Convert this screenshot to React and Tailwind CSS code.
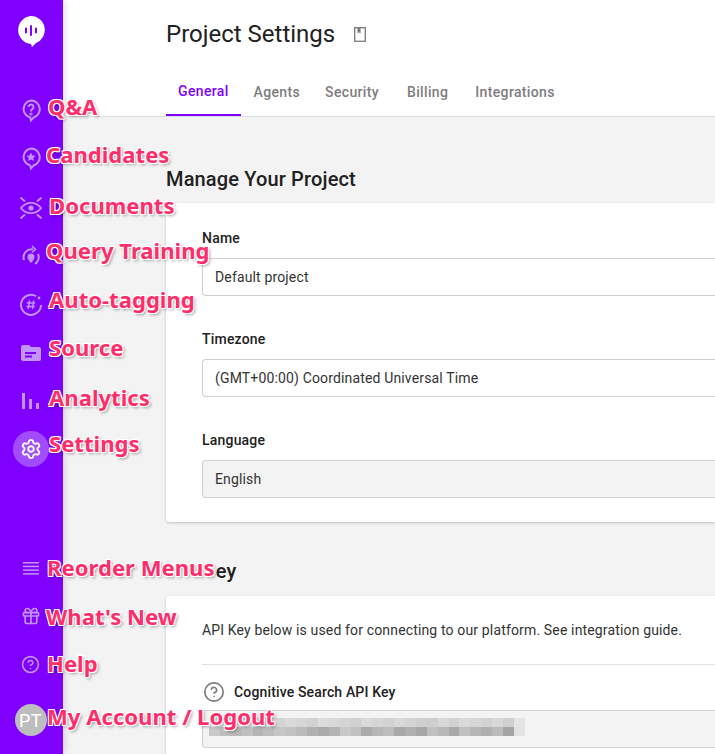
import React from 'react'
import { CircleHelp, Gift, Settings } from 'lucide-react'

const tabs = [
  { name: 'General', cls: 'text-[#7f00ff] border-b-2 border-[#7f00ff] mr-[1px]' },
  { name: 'Agents', cls: 'text-[#7d7d7d] mr-[1px]' },
  { name: 'Security', cls: 'text-[#7d7d7d] mr-[4px]' },
  { name: 'Billing', cls: 'text-[#7d7d7d] mr-[3px]' },
  { name: 'Integrations', cls: 'text-[#7d7d7d]' },
]

const blurTop = ['#e8e8e8', '#e4e4e4', '#dedede', '#e0e0e0', '#d8d8d8', '#dcdcdc', '#d4d4d4', '#dadada', '#d6d6d6', '#d2d2d2', '#dcdcdc', '#d8d8d8', '#d4d4d4', '#d0d0d0', '#dadada', '#d6d6d6', '#d2d2d2', '#d8d8d8', '#d4d4d4', '#d0d0d0', '#cfcfcf', '#d8d8d8', '#d2d2d2', '#dadada', '#d6d6d6', '#d2d2d2', '#d8d8d8', '#d0d0d0', '#e4e4e4']
const blurBottom = ['#c8c8c8', '#bdbdbd', '#b8b8b8', '#c0c0c0', '#b4b4b4', '#bcbcbc', '#c6c6c6', '#c2c2c2', '#bbbbbb', '#b0b0b0', '#aaaaaa', '#b4b4b4', '#c8c8c8', '#c0c0c0', '#aaaaaa', '#b6b6b6', '#bcbcbc', '#a8a8a8', '#b0b0b0', '#a6a6a6', '#c0c0c0', '#b8b8b8', '#a8a8a8', '#c0c0c0', '#b6b6b6', '#b0b0b0', '#bcbcbc', '#a4a4a4', '#e2e2e2']

const labels = [
  { text: 'Q&A', cls: 'top-[91px] left-[48px]' },
  { text: 'Candidates', cls: 'top-[139px] left-[46px]' },
  { text: 'Documents', cls: 'top-[190px] left-[49px]' },
  { text: 'Query Training', cls: 'top-[235px] left-[46px]' },
  { text: 'Auto-tagging', cls: 'top-[284px] left-[49px]' },
  { text: 'Source', cls: 'top-[332px] left-[49px]' },
  { text: 'Analytics', cls: 'top-[382px] left-[49px]' },
  { text: 'Settings', cls: 'top-[428px] left-[49px]' },
  { text: 'Reorder Menus', cls: 'top-[552px] left-[47px]' },
  { text: "What's New", cls: 'top-[601px] left-[46px]' },
  { text: 'Help', cls: 'top-[648px] left-[47px]' },
  { text: 'My Account / Logout', cls: 'top-[701px] left-[47px]' },
]

const Logo = () => (
  <svg width="28" height="32" viewBox="0 0 28 32">
    <path d="M14 0a14 14 0 0 1 5 27l-4 4-1-3.100A14 14 0 0 1 14 0z" fill="#fff" />
    <path d="M9 12.500v4M14 10v9M19 12.500v4" stroke="#7f00ff" strokeWidth="2" strokeLinecap="round" />
  </svg>
)

const QaIcon = () => (
  <svg width="20" height="24" viewBox="0 0 20 24" fill="none" stroke="#c393ff" strokeWidth="2">
    <path d="M10 1.500a8.600 8.600 0 0 1 3 16.700l-3 3.300-.8-3.100A8.600 8.600 0 0 1 10 1.500z" />
    <path d="M7.500 8a2.500 2.500 0 1 1 3.800 2.200c-.9.600-1.300 1-1.300 2.300" />
    <circle cx="10" cy="15" r=".6" fill="#c393ff" />
  </svg>
)

const StarIcon = () => (
  <svg width="20" height="24" viewBox="0 0 20 24" fill="none" stroke="#c393ff" strokeWidth="2">
    <path d="M10 1.500a8.600 8.600 0 0 1 3 16.700l-3 3.300-.8-3.100A8.600 8.600 0 0 1 10 1.500z" />
    <path d="M10 5.500l1.400 3 3.200.3-2.400 2.100.8 3.200-3-1.700-3 1.700.8-3.200-2.400-2.100 3.200-.3z" fill="#c393ff" stroke="none" />
  </svg>
)

const EyeIcon = () => (
  <svg width="24" height="24" viewBox="0 0 24 24" fill="none" stroke="#c393ff" strokeWidth="1.800">
    <path d="M2 12c2.500-3.500 6-5.200 10-5.200s7.500 1.700 10 5.200c-2.500 3.500-6 5.200-10 5.200S4.500 15.500 2 12z" />
    <circle cx="12" cy="12" r="2.600" fill="#c393ff" stroke="none" />
    <path d="M2 2l3.500 3M22 2l-3.500 3M2 22l3.500-3M22 22l-3.500-3" strokeLinecap="round" />
  </svg>
)

const TrainIcon = () => (
  <svg width="20" height="24" viewBox="0 0 20 24" fill="none" stroke="#c393ff" strokeWidth="2">
    <path d="M3 15a8 8 0 0 1 9-10.500M17 9a8 8 0 0 1-3 10" />
    <path d="M11 1l3.500 3.500-3.500 3" strokeWidth="1.600" />
    <path d="M10 8.500a3.500 3.500 0 0 1 3.500 3.500c0 2.500-3.500 6-3.500 6s-3.500-3.500-3.500-6A3.500 3.500 0 0 1 10 8.500z" fill="#c393ff" stroke="none" />
  </svg>
)

const TagIcon = () => (
  <svg width="24" height="24" viewBox="0 0 24 24" fill="none" stroke="#c393ff" strokeWidth="2">
    <path d="M17 3.200A10 10 0 1 0 22 12" />
    <circle cx="20" cy="5" r="1.400" fill="#c393ff" stroke="none" />
    <path d="M10.500 7.500L9.300 16M14.700 7.500L13.500 16M7.800 10h8.400M7.400 13.500h8.400" strokeWidth="1.500" />
  </svg>
)

const FolderIcon = () => (
  <svg width="20" height="16" viewBox="0 0 20 16">
    <path d="M2 0h6l2 2h8a2 2 0 0 1 2 2v10a2 2 0 0 1-2 2H2a2 2 0 0 1-2-2V2a2 2 0 0 1 2-2z" fill="#c393ff" />
    <path d="M4 7h11v2H4zM4 10.500h7v2H4z" fill="#7f00ff" />
  </svg>
)

const BarsIcon = () => (
  <svg width="17" height="16" viewBox="0 0 17 16" fill="#c393ff">
    <rect x="0" y="0" width="3" height="16" />
    <rect x="7" y="6" width="3" height="10" />
    <rect x="14" y="10" width="3" height="6" />
  </svg>
)

const LinesIcon = () => (
  <svg width="16" height="13" viewBox="0 0 16 13" fill="#c393ff">
    <rect y="0" width="16" height="1.500" />
    <rect y="3.700" width="16" height="1.500" />
    <rect y="7.400" width="16" height="1.500" />
    <rect y="11.100" width="16" height="1.500" />
  </svg>
)

const BookIcon = () => (
  <svg width="12" height="15" viewBox="0 0 12 15" fill="none" stroke="#7a7a7a" strokeWidth="1.300">
    <rect x=".7" y=".7" width="10.600" height="13.600" />
    <path d="M3.500 1v5.500l1.500-1.200 1.500 1.200V1" fill="#7a7a7a" stroke="none" />
  </svg>
)

const Field = ({ label, value, disabled }) => (
  <div className="mb-[33px] last:mb-0">
    <div className="text-[14px] leading-[20px] font-medium text-[#212121] tracking-[0.2px]">{label}</div>
    <div
      className={`mt-[10px] h-[38px] rounded-l-[4px] border border-[#cfcfcf] border-r-0 px-[12px] flex items-center text-[14px] text-[#333] tracking-[0.15px] ${
        disabled ? 'bg-[#f3f3f3]' : 'bg-white'
      }`}
    >
      {value}
    </div>
  </div>
)

export default function App() {
  return (
    <div className="relative w-[715px] h-[754px] overflow-hidden flex bg-[#f3f3f3] font-['Roboto',sans-serif]">
      {/* Sidebar */}
      <aside className="relative z-10 w-[63px] h-full shrink-0 bg-[#7f00ff] flex flex-col items-center text-[#c393ff] pr-[2px] shadow-[2px_0_6px_rgba(0,0,0,0.12)]">
        <div className="mt-[16px] h-[32px] flex justify-center"><Logo /></div>
        <div className="mt-[39px] flex flex-col items-center">
          <div className="h-[48px] flex items-center"><QaIcon /></div>
          <div className="h-[48px] flex items-center"><StarIcon /></div>
          <div className="h-[50px] flex items-center"><EyeIcon /></div>
          <div className="h-[48px] flex items-center"><TrainIcon /></div>
          <div className="h-[48px] flex items-center"><TagIcon /></div>
          <div className="h-[48px] flex items-center"><FolderIcon /></div>
          <div className="h-[48px] flex items-center"><BarsIcon /></div>
          <div className="h-[48px] flex items-center">
            <div className="w-[36px] h-[36px] rounded-full bg-[#a24cff] flex items-center justify-center">
              <Settings size={22} color="#fff" strokeWidth={2} />
            </div>
          </div>
        </div>
        <div className="mt-[71px] flex flex-col items-center">
          <div className="h-[48px] flex items-center"><LinesIcon /></div>
          <div className="h-[48px] flex items-center"><Gift size={20} strokeWidth={2} /></div>
          <div className="h-[48px] flex items-center"><CircleHelp size={19} strokeWidth={2} /></div>
          <div className="mt-[16px] w-[32px] h-[32px] rounded-full bg-[#bdbdbd] text-white text-[18px] tracking-[0.5px] flex items-center justify-center">PT</div>
        </div>
      </aside>

      {/* Main */}
      <main className="flex-1 min-w-0 flex flex-col">
        <header className="h-[117px] shrink-0 bg-white border-b border-[#dedede] pl-[103px] flex flex-col">
          <div className="mt-[18px] flex items-center h-[32px]">
            <h1 className="text-[24px] leading-[32px] text-[#212121]">Project Settings</h1>
            <span className="ml-[19px] flex"><BookIcon /></span>
          </div>
          <nav className="mt-auto flex">
            {tabs.map((tab) => (
              <div
                key={tab.name}
                className={`h-[50px] pt-[2px] flex items-center justify-center px-[12px] text-[14px] font-medium tracking-[0.35px] ${tab.cls}`}
              >
                {tab.name}
              </div>
            ))}
          </nav>
        </header>

        <div className="flex-1 pl-[103px]">
          <h2 className="mt-[49px] text-[20px] leading-[26px] font-medium text-[#212121] tracking-[0.15px]">Manage Your Project</h2>
          <section className="mt-[11px] h-[319px] bg-white rounded-l-[4px] shadow-[0_1px_3px_rgba(0,0,0,0.2)] pl-[36px] pt-[25px]">
            <Field label="Name" value="Default project" />
            <Field label="Timezone" value="(GMT+00:00) Coordinated Universal Time" />
            <Field label="Language" value="English" disabled />
          </section>

          {/* first letters sit under the Reorder Menus label in the reference */}
          <h2 className="mt-[36px] text-[20px] leading-[26px] font-medium text-[#212121] tracking-[0.15px]">
            <span className="text-transparent">API K</span>ey
          </h2>
          <section className="mt-[12px] h-[170px] bg-white rounded-l-[4px] shadow-[0_1px_3px_rgba(0,0,0,0.2)] pl-[36px] pt-[24px]">
            <p className="text-[14px] leading-[20px] text-[#333] tracking-[0.15px]">API Key below is used for connecting to our platform. See integration guide.</p>
            <div className="mt-[24px] border-t border-[#e2e2e2] pt-[16px] flex items-center pl-[1px]">
              <CircleHelp size={22} color="#7a7a7a" strokeWidth={1.800} />
              <span className="ml-[9px] text-[14px] font-medium text-[#212121] tracking-[0.15px]">Cognitive Search API Key</span>
            </div>
            <div className="mt-[7px] h-[38px] rounded-l-[4px] border border-[#cfcfcf] border-r-0 bg-[#f3f3f3] pl-[6px] pt-[7px]">
              <div className="flex">
                {blurTop.map((c, i) => (
                  <div key={i} className="w-[10.9px] h-[9px]" style={{ background: c }} />
                ))}
              </div>
              <div className="flex">
                {blurBottom.map((c, i) => (
                  <div key={i} className="w-[10.9px] h-[9px]" style={{ background: c }} />
                ))}
              </div>
            </div>
          </section>
        </div>
      </main>

      {/* Annotation labels over the sidebar */}
      {labels.map((l) => (
        <span
          key={l.text}
          className={`absolute z-20 ${l.cls} whitespace-nowrap font-['Noto_Sans',sans-serif] font-bold text-[22.1px] leading-[30px] text-[#ff2d6b] [text-shadow:1px_1px_0_#fff,-1px_-1px_0_#fff,1px_-1px_0_#fff,-1px_1px_0_#fff,2px_2px_3px_rgba(0,0,0,0.35)]`}
        >
          {l.text}
        </span>
      ))}
    </div>
  )
}
